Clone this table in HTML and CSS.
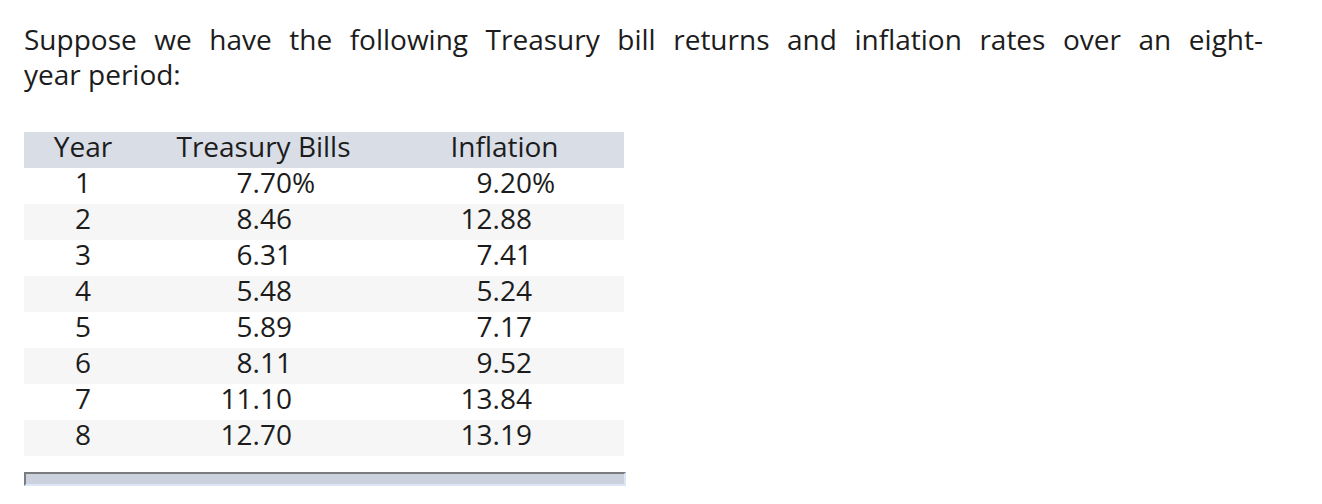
FILE: index.html
```html
<!DOCTYPE html>
<html>
<head>
<meta charset="utf-8">
<link rel="stylesheet" href="styles.css">
</head>
<body>
<div class="page">
  <p class="intro"><span class="line1">Suppose we have the following Treasury bill returns and inflation rates over an eight-</span>year period:</p>
  <table class="data">
    <thead>
      <tr><th class="c1">Year</th><th class="c2">Treasury Bills</th><th class="c3">Inflation</th></tr>
    </thead>
    <tbody>
      <tr><td class="c1">1</td><td class="c2">7.70<span class="pct">%</span></td><td class="c3">9.20<span class="pct">%</span></td></tr>
      <tr><td class="c1">2</td><td class="c2">8.46</td><td class="c3">12.88</td></tr>
      <tr><td class="c1">3</td><td class="c2">6.31</td><td class="c3">7.41</td></tr>
      <tr><td class="c1">4</td><td class="c2">5.48</td><td class="c3">5.24</td></tr>
      <tr><td class="c1">5</td><td class="c2">5.89</td><td class="c3">7.17</td></tr>
      <tr><td class="c1">6</td><td class="c2">8.11</td><td class="c3">9.52</td></tr>
      <tr><td class="c1">7</td><td class="c2">11.10</td><td class="c3">13.84</td></tr>
      <tr><td class="c1">8</td><td class="c2">12.70</td><td class="c3">13.19</td></tr>
    </tbody>
  </table>
  <div class="scrollbar"></div>
</div>
</body>
</html>
```

FILE: styles.css
```css
html, body {
  margin: 0;
  padding: 0;
  background: #ffffff;
}

.page {
  padding: 22px 0 0 24px;
  font-family: "Open Sans", "Liberation Sans", sans-serif;
  color: #1c1c1c;
}

.intro {
  margin: 0;
  width: 1239px;
  font-size: 28px;
  line-height: 35px;
}

.line1 {
  display: block;
  text-align: justify;
  text-align-last: justify;
}

.data {
  margin-top: 40px;
  border-collapse: collapse;
  width: 600px;
  table-layout: fixed;
  font-size: 28px;
}

.data th,
.data td {
  height: 28px;
  padding: 0 0 8px 0;
  font-weight: normal;
  line-height: 28px;
  white-space: nowrap;
  vertical-align: top;
  box-sizing: content-box;
}

.data thead tr {
  background: #d9dde6;
}

.data tbody tr:nth-child(even) {
  background: #f6f6f6;
}

.data th.c1,
.data td.c1 {
  width: 118px;
  text-align: center;
}

.data th.c2 {
  width: 243px;
  text-align: center;
}

.data th.c3 {
  text-align: center;
}

.data td.c2 {
  text-align: right;
  padding-right: 93px;
}

.data td.c3 {
  text-align: right;
  padding-right: 92px;
}

.pct {
  display: inline-block;
  width: 0;
  overflow: visible;
}

.scrollbar {
  margin-top: 16px;
  width: 598px;
  height: 10px;
  background: #cbd1dd;
  border-top: 2px solid #7b7c80;
  border-left: 2px solid #7b7c80;
  border-bottom: 2px solid #dde6f7;
  border-right: 2px solid #dde6f7;
}
```
